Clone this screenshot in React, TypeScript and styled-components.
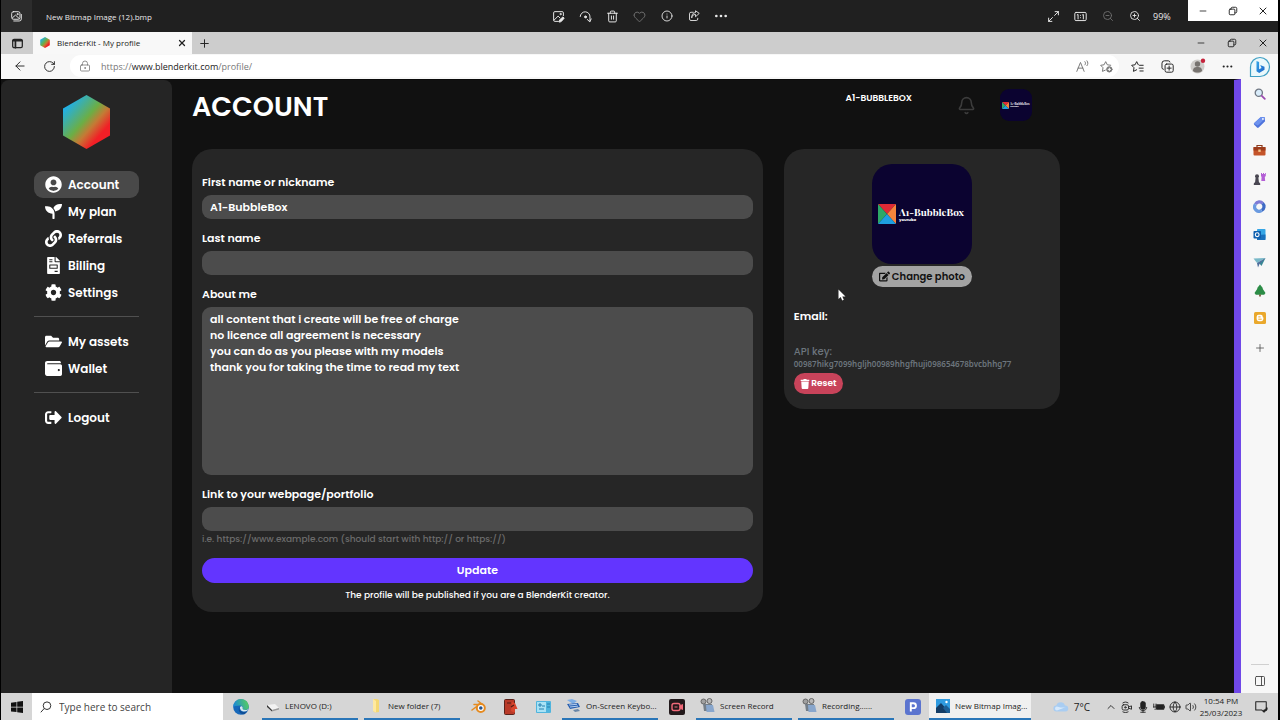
import React from "react";
import styled, { createGlobalStyle } from "styled-components";
import {
  FaUserCircle, FaSeedling, FaLink, FaFileInvoice, FaCog, FaFolderOpen, FaWallet,
  FaSignOutAlt, FaEdit, FaTrash,
} from "react-icons/fa";
import {
  Trash2, Heart, Info, Maximize2, ZoomIn, ZoomOut, Minus, X, Plus, ArrowLeft,
  RotateCw, LockKeyhole, Ellipsis, ChevronUp, Bell, PanelRight, Volume2, Globe,
} from "lucide-react";

const brandFont = `Poppins, Inter, "Open Sans", sans-serif`;
const systemFont = `"Segoe UI", "Open Sans", "Noto Sans", sans-serif`;

const GlobalStyle = createGlobalStyle`
  *, *::before, *::after { box-sizing: border-box; }
  body { margin: 0; background: #000; font-family: ${systemFont}; }
  button, input, textarea { font: inherit; color: inherit; }
  button { border: 0; padding: 0; background: none; cursor: pointer; }
  svg { display: block; flex: none; }
`;

/* ---------- window shells ---------- */

const Desktop = styled.div`
  min-height: 100vh;
  display: flex;
  flex-direction: column;
  border-left: 1px solid #000;
  border-right: 2px solid #000;
`;

const PhotoBar = styled.header`
  display: grid;
  grid-template-columns: 1fr auto 1fr;
  height: 32px;
  background: #202020;
  color: #e8e8e8;
`;

const PhotoTitle = styled.div`
  display: flex;
  align-items: center;
  gap: 14px;
  font-size: 8px;
  white-space: nowrap;
`;

const AppTile = styled.span`
  display: grid;
  place-items: center;
  width: 31px;
  height: 32px;
  background: #2c2c2c;
`;

const ToolGroup = styled.div<{ $end?: boolean }>`
  display: flex;
  align-items: center;
  justify-content: ${(p) => (p.$end ? "flex-end" : "center")};
`;

const IconButton = styled.button<{ $w?: number; $dim?: boolean }>`
  display: grid;
  place-items: center;
  width: ${(p) => p.$w ?? 27}px;
  height: 22px;
  opacity: ${(p) => (p.$dim ? 0.4 : 1)};
`;

const ZoomLevel = styled.span`
  width: 40px;
  padding-left: 5px;
  font-size: 9px;
`;

const WindowControls = styled.div<{ $light?: boolean }>`
  display: flex;
  align-self: flex-start;
  height: 21px;
  background: ${(p) => (p.$light ? "#fff" : "transparent")};
  color: #222;
`;

const Browser = styled.section`
  flex: 1;
  display: flex;
  flex-direction: column;
`;

const TabStrip = styled.div`
  display: flex;
  height: 22px;
  padding-left: 1px;
  background: #cdcdcd;
  color: #222;
`;

const Tab = styled.div`
  display: flex;
  align-items: center;
  gap: 7px;
  width: 159px;
  padding: 0 1px 1px 7px;
  background: #f8f8f8;
  font-size: 8px;
  white-space: nowrap;
`;

const Spacer = styled.span`
  flex: 1;
`;

const BrowserBody = styled.div`
  flex: 1;
  display: flex;
`;

const BrowserMain = styled.div`
  flex: 1;
  min-width: 0;
  display: flex;
  flex-direction: column;
`;

const Toolbar = styled.div`
  display: flex;
  align-items: center;
  height: 25px;
  padding: 0 0 1px 4px;
  background: #f7f7f7;
  color: #222;
`;

const AddressBar = styled.div`
  flex: 1;
  display: flex;
  align-items: center;
  height: 22px;
  margin: 0 3px 0 7px;
  padding: 0 1px 0 9px;
  border-radius: 11px;
  background: #fff;
  color: #777;
  font-size: 9px;
`;

const Url = styled.div`
  flex: 1;
  padding-left: 10px;
  white-space: nowrap;

  b { font-weight: 400; color: #222; }
`;

const TrailingTools = styled.div`
  display: flex;
  padding-right: 1px;
`;

const EdgeSidebar = styled.aside`
  width: 37px;
  display: flex;
  flex-direction: column;
  align-items: center;
  background: #f7f7f7;
  color: #444;
`;

const SideButton = styled.button<{ $h?: number }>`
  display: grid;
  place-items: center;
  width: 37px;
  height: ${(p) => p.$h ?? 28}px;
`;

const SideRule = styled.hr`
  width: 18px;
  margin: 0 0 4px;
  border: 0;
  border-top: 1px solid #d0d0d0;
`;

/* ---------- profile page ---------- */

const Page = styled.div`
  position: relative;
  flex: 1;
  display: flex;
  border-top: 1px solid #0a0a0a;
  border-right: 7px solid #7048e8;
  background: #111;
  color: #fff;
  font-family: ${brandFont};
`;

const Sidebar = styled.nav`
  width: 171px;
  padding: 15px 33px;
  border-radius: 8px 8px 0 0;
  background: #252525;
`;

const LogoLink = styled.a`
  display: flex;
  justify-content: center;
  margin-bottom: 22px;
`;

const NavList = styled.ul`
  margin: 0;
  padding: 0;
  list-style: none;

  & + & {
    margin-top: 10px;
    padding-top: 11px;
    border-top: 1px solid #505050;
  }
`;

const NavLink = styled.a<{ $active?: boolean }>`
  display: flex;
  align-items: center;
  gap: 6px;
  height: 27px;
  padding-left: 11px;
  border-radius: 9px;
  background: ${(p) => (p.$active ? "#494949" : "transparent")};
  color: #fff;
  font-size: 12px;
  font-weight: 600;
  text-decoration: none;
  white-space: nowrap;
`;

const NavIcon = styled.span`
  width: 17px;

  svg { width: auto; height: 17px; }
`;

const Content = styled.main`
  flex: 1;
  max-width: 908px;
  padding: 0 20px;
`;

const ContentHeader = styled.header`
  display: flex;
  align-items: flex-start;
  height: 69px;
  padding: 9px 28px 0 0;
`;

const Title = styled.h1`
  flex: 1;
  margin: 0;
  font-size: 27px;
  line-height: 36px;
  font-weight: 600;
`;

const UserName = styled.span`
  margin-right: 45px;
  font-size: 9px;
  line-height: 18px;
  font-weight: 600;
`;

const BellButton = styled.button`
  margin: 7px 24px 0 0;
  color: #3c3c3c;
`;

const Columns = styled.div`
  display: grid;
  grid-template-columns: 31fr 15fr;
  align-items: start;
  gap: 21px;
`;

const Card = styled.section`
  padding: 15px 10px;
  border-radius: 20px;
  background: #262626;
`;

const ProfileForm = styled.form`
  display: flex;
  flex-direction: column;
  padding: 14px 10px 8px;
  border-radius: 20px;
  background: #262626;
`;

const Label = styled.label`
  padding: 10px 0 4px;
  font-size: 11px;
  line-height: 18px;
  font-weight: 600;
`;

const TextInput = styled.input`
  width: 100%;
  height: 24px;
  padding: 0 8px;
  border: 0;
  border-radius: 9px;
  background: #4c4c4c;
  font-size: 11px;
  font-weight: 600;
`;

const TextArea = styled.textarea`
  width: 100%;
  height: 168px;
  padding: 4px 8px;
  border: 0;
  border-radius: 9px;
  background: #4c4c4c;
  font-size: 11px;
  line-height: 16px;
  font-weight: 600;
  resize: none;
`;

const Help = styled.small`
  margin-bottom: 10px;
  color: #6c6c6c;
  font-size: 9px;
  line-height: 17px;
  font-weight: 500;
`;

const SubmitButton = styled.button`
  height: 25px;
  border-radius: 13px;
  background: #6335ff;
  font-size: 11px;
  font-weight: 600;
`;

const Note = styled.p`
  margin: 3px 0 0;
  font-size: 9px;
  line-height: 18px;
  font-weight: 500;
  text-align: center;
`;

const PhotoBlock = styled.div`
  display: flex;
  flex-direction: column;
  align-items: center;
  gap: 2px;
`;

const AvatarBox = styled.span<{ $small?: boolean }>`
  display: flex;
  align-items: center;
  gap: ${(p) => (p.$small ? 1 : 3)}px;
  width: ${(p) => (p.$small ? 32 : 100)}px;
  height: ${(p) => (p.$small ? 32 : 100)}px;
  padding-left: ${(p) => (p.$small ? 2 : 6)}px;
  border-radius: ${(p) => (p.$small ? 9 : 20)}px;
  background: #0b0330;
  color: #fff;
  white-space: nowrap;
`;

const AvatarText = styled.span<{ $small?: boolean }>`
  display: flex;
  flex-direction: column;
  font-family: "Playfair Display", "Liberation Serif", serif;
  font-size: ${(p) => (p.$small ? 3 : 10)}px;
  line-height: ${(p) => (p.$small ? 4 : 10)}px;
  font-weight: 700;

  small {
    font-family: ${brandFont};
    font-size: ${(p) => (p.$small ? 2 : 4)}px;
    line-height: ${(p) => (p.$small ? 2 : 5)}px;
  }
`;

const PillButton = styled.button<{ $danger?: boolean }>`
  display: flex;
  align-items: center;
  justify-content: center;
  gap: ${(p) => (p.$danger ? 1 : 2)}px;
  min-width: ${(p) => (p.$danger ? 49 : 100)}px;
  height: 21px;
  border-radius: 11px;
  background: ${(p) => (p.$danger ? "#c8435a" : "#a3a3a3")};
  color: ${(p) => (p.$danger ? "#fff" : "#111")};
  font-size: ${(p) => (p.$danger ? 9 : 10)}px;
  font-weight: 600;
  white-space: nowrap;
`;

const Email = styled.p`
  margin: 20px 0 21px;
  font-size: 11px;
  line-height: 18px;
  font-weight: 600;
`;

const ApiKey = styled.p`
  margin: 0 0 3px;
  color: #6c757d;
  font-size: 10px;
  line-height: 12px;
  font-weight: 500;

  code {
    display: block;
    font-family: "Noto Sans", sans-serif;
    font-size: 8px;
    font-weight: 600;
  }
`;

const Cursor = styled.svg`
  position: absolute;
  left: 837px;
  top: 209px;
`;

/* ---------- taskbar ---------- */

const Taskbar = styled.footer`
  display: flex;
  align-items: center;
  height: 27px;
  background: #d6d6d6;
  color: #222;
`;

const SearchBox = styled.label`
  display: flex;
  align-items: center;
  gap: 7px;
  width: 191px;
  height: 27px;
  padding-left: 8px;
  background: #fff;

  input {
    flex: 1;
    min-width: 0;
    padding: 0;
    border: 0;
    outline: 0;
    font-size: 10px;
  }
  input::placeholder { color: #444; opacity: 1; }
`;

const TaskIcon = styled.button<{ $w?: number }>`
  display: grid;
  place-items: center;
  width: ${(p) => p.$w ?? 32}px;
  height: 27px;
`;

const TaskButton = styled.button<{ $active?: boolean }>`
  display: flex;
  align-items: center;
  gap: 5px;
  width: ${(p) => (p.$active ? 102 : 96)}px;
  height: 27px;
  margin: 0 ${(p) => (p.$active ? 0 : 3)}px;
  padding: 0 0 0 ${(p) => (p.$active ? 7 : 4)}px;
  border-bottom: 2px solid #2a76b8;
  background: ${(p) => (p.$active ? "#f0f0f0" : "transparent")};
  font-size: 8px;
  white-space: nowrap;
`;

const Weather = styled.button`
  display: flex;
  align-items: center;
  gap: 5px;
  margin-right: 13px;
  font-size: 10px;
`;

const Clock = styled.time`
  width: 44px;
  font-size: 8px;
  line-height: 12px;
  text-align: center;
  white-space: nowrap;
`;

/* ---------- drawings ---------- */

const Stroke = ({ s = 13, children, w = 1.2 }: { s?: number; w?: number; children: React.ReactNode }) => (
  <svg width={s} height={s} viewBox="0 0 16 16" fill="none" stroke="currentColor" strokeWidth={w} strokeLinecap="round" strokeLinejoin="round">
    {children}
  </svg>
);

const Hexagon = ({ w, h, id }: { w: number; h: number; id: string }) => (
  <svg width={w} height={h} viewBox="0 0 47 54">
    <defs>
      <linearGradient id={id} gradientUnits="userSpaceOnUse" x1="2" y1="9" x2="42" y2="44">
        <stop offset="0.05" stopColor="#20b0e8" />
        <stop offset="0.48" stopColor="#6cae45" />
        <stop offset="0.66" stopColor="#c47a35" />
        <stop offset="0.88" stopColor="#f21f26" />
      </linearGradient>
    </defs>
    <path d="M23.5 0 47 13.5v27L23.5 54 0 40.500v-27z" fill={`url(#${id})`} />
  </svg>
);

const Restore = () => (
  <Stroke s={10} w={1.5}>
    <rect x="2" y="5" width="9" height="9" rx="1.500" />
    <path d="M5 5V4a2 2 0 0 1 2-2h5a2 2 0 0 1 2 2v5a2 2 0 0 1-2 2h-1" />
  </Stroke>
);

const Mosaic = ({ w, h }: { w: number; h: number }) => (
  <svg width={w} height={h} viewBox="0 0 18 20" preserveAspectRatio="none">
    <path d="M0 0h18L9 10z" fill="#e02a35" />
    <path d="M0 0v20l9-10z" fill="#2da866" />
    <path d="M18 0v20L9 10z" fill="#f5863c" />
    <path d="M0 20h18L9 10z" fill="#1e9fe0" />
  </svg>
);

const Avatar = ({ small }: { small?: boolean }) => (
  <AvatarBox $small={small}>
    <Mosaic w={small ? 7 : 18} h={small ? 7 : 20} />
    <AvatarText $small={small}>
      A1-BubbleBox
      <small>youtube</small>
    </AvatarText>
  </AvatarBox>
);

const BingIcon = () => (
  <svg width="22" height="22" viewBox="0 0 22 22">
    <defs>
      <linearGradient id="bing" x1="0" y1="0" x2="1" y2="1">
        <stop offset="0" stopColor="#35a9e8" /><stop offset="1" stopColor="#1b60c8" />
      </linearGradient>
    </defs>
    <path d="M1.500 20.500V11a9.500 9.500 0 1 1 9.500 9.500z" fill="#eaf8fb" stroke="#3f9fc4" strokeWidth="1.200" />
    <path d="M7.500 5l2.600 1v7.200l2.400-1.300-1.300-2.900 4.300 1.700v3L10.200 17l-2.700-1.800z" fill="url(#bing)" />
  </svg>
);

const MagnifierIcon = () => (
  <svg width="12" height="12" viewBox="0 0 12 12" fill="none" strokeLinecap="round">
    <circle cx="4.800" cy="4.800" r="3.600" fill="#d9ecfa" stroke="#6f7783" strokeWidth="1.300" />
    <path d="M7.800 7.800l3 3" stroke="#9a4bb0" strokeWidth="1.800" />
  </svg>
);

const TagIcon = () => (
  <svg width="13" height="13" viewBox="0 0 13 13">
    <path d="M7.500 1.200 11.500 1l.6 4.300-6.400 6.200a1.200 1.200 0 0 1-1.700 0L1.200 8.800a1.200 1.200 0 0 1 0-1.700z" fill="#4f74dc" />
    <path d="M7.500 1.200 11.500 1l.3 2-7 6.500-3.900-1.900z" fill="#6d92ee" /><circle cx="9.900" cy="2.900" r=".9" fill="#fff" />
  </svg>
);

const BriefcaseIcon = () => (
  <svg width="13" height="12" viewBox="0 0 13 12">
    <path d="M4 3V1.500h5V3" fill="none" stroke="#8c3a1c" strokeWidth="1.200" />
    <rect x=".5" y="3" width="12" height="8.500" rx="1" fill="#c4542a" />
    <path d="M.5 3h12v3.500h-12z" fill="#9d3c1c" /><rect x="5.300" y="5.500" width="2.400" height="2.400" fill="#f5c98c" />
  </svg>
);

const GamesIcon = () => (
  <svg width="13" height="13" viewBox="0 0 13 13">
    <path d="M8 1h1v1h1V1h1v1h1V1h.8v3l-1 1 .4 4H8.300l.3-4L8 4z" fill="#b45fd6" />
    <circle cx="4" cy="4.300" r="2" fill="#4a4752" />
    <path d="M2.600 5.800h2.800L5.900 10l1.300 1.500V13H.8v-1.500L2.100 10z" fill="#4a4752" />
  </svg>
);

const LoopIcon = () => (
  <svg width="13" height="13" viewBox="0 0 13 13" fill="none" strokeWidth="3.200">
    <path d="M2.500 4.300a4.400 4.400 0 0 1 7.300-.8" stroke="#7e7bd6" />
    <path d="M9.700 3.400a4.400 4.400 0 0 1-1 7" stroke="#3e6ac4" />
    <path d="M8.700 10.400a4.400 4.400 0 0 1-6.200-6.100" stroke="#6a9ae0" />
  </svg>
);

const OutlookIcon = () => (
  <svg width="13" height="13" viewBox="0 0 13 13">
    <rect x="4" y="1" width="8.500" height="10" rx=".8" fill="#35a5e5" />
    <path d="M4 7l8.500-.5V12H4z" fill="#1a70bc" />
    <rect x=".5" y="3" width="7.500" height="7.500" rx=".8" fill="#0f5fae" />
    <circle cx="4.200" cy="6.700" r="1.900" fill="none" stroke="#fff" strokeWidth="1.100" />
  </svg>
);

const PlaneIcon = () => (
  <svg width="13" height="11" viewBox="0 0 13 11">
    <path d="M.5 1.500 12.500 1 4 6z" fill="#78b8c8" /><path d="M12.500 1 8.500 9 6 6z" fill="#3a8794" />
    <path d="M12.500 1 4 6l1 4.500L6.500 7z" fill="#4e6e9c" />
  </svg>
);

const TreeIcon = () => (
  <svg width="12" height="13" viewBox="0 0 12 13">
    <path d="M6 .5 9 4.200l-.5.4L11.500 9l-1.300 1.700H1.800L.5 9l3-4.400-.5-.4z" fill="#2c8c46" />
    <path d="M5.200 10.500h1.600v2H5.200z" fill="#6b4a2a" />
  </svg>
);

const BloggerIcon = () => (
  <svg width="12" height="12" viewBox="0 0 12 12">
    <rect width="12" height="12" rx="1.500" fill="#eaa82c" />
    <path d="M4.600 2.800h2.200c1.300 0 1.900.9 1.900 2 0 .5.200.7.700.7v1.600a2.100 2.100 0 0 1-2.100 2.100H4.700a2.100 2.100 0 0 1-2.100-2.100V4.900a2.100 2.100 0 0 1 2-2.100z" fill="#fff" />
    <path d="M4.700 4.900h1.500M4.700 7.200h2.600" stroke="#eaa82c" strokeLinecap="round" />
  </svg>
);

const ProfileIcon = () => (
  <svg width="16" height="16" viewBox="0 0 16 16">
    <circle cx="7.500" cy="8.500" r="7" fill="#cfcdca" /><circle cx="7.500" cy="6" r="2.700" fill="#77736f" />
    <path d="M3 13c0-3.500 2-4 4.500-4s4.500.5 4.500 4c-2.500 2-6.500 2-9 0z" fill="#77736f" />
    <circle cx="13" cy="2.800" r="2.200" fill="#c5243c" />
  </svg>
);

const WindowsIcon = () => (
  <svg width="12" height="12" viewBox="0 0 12 12" fill="#111">
    <path d="M0 1.700 5.500.9v4.800H0zM6.200.8 12 0v5.700H6.200zM0 6.400h5.500v4.700L0 10.400zM6.200 6.400H12V12l-5.800-.8z" />
  </svg>
);

const EdgeIcon = () => (
  <svg width="16" height="16" viewBox="0 0 16 16">
    <defs>
      <linearGradient id="edge" x1="0" y1="0.500" x2="1" y2="0.300">
        <stop offset="0" stopColor="#1a88d8" /><stop offset="1" stopColor="#58cf5c" />
      </linearGradient>
    </defs>
    <circle cx="8" cy="8" r="7.800" fill="#1668ba" />
    <path d="M.2 8A7.800 7.800 0 0 1 15.800 7.500c0 2.400-1.700 3.500-3.700 3.500-2 0-2.600-.8-2.400-1.400.5-.6.500-3.100-2.800-3.100C3.500 6.500.8 7.500.2 8z" fill="url(#edge)" />
    <path d="M6.800 7.200c-1.700 2.500.5 6.300 5 5.600 1.300-.2 2.300-.8 2.800-1L12 15c-5 1.500-8-4.500-5.200-7.800z" fill="#0e4f98" />
    <path d="M7 8.200c.7-1.500 2.800-1.200 2.700.8-.6 1.200.7 2 2.500 2 1.500 0 2.600-.5 3.200-1.300l-.6 1.600c-3 2.500-8.200.9-7.800-3.100z" fill="#d6e8ee" />
  </svg>
);

const DriveIcon = () => (
  <svg width="14" height="12" viewBox="0 0 14 12">
    <path d="M1 5l8-1 4 4-7 2z" fill="#f2f2f2" /><path d="M1 5l5 5v1.500L1 7z" fill="#333" /><path d="M6 10l7-2v1.500l-7 2z" fill="#9a9a9a" />
  </svg>
);

const FolderIcon = () => (
  <svg width="15" height="15" viewBox="2 0 15 15">
    <path d="M7 1h4l2 1v12l-4 .5L7 13z" fill="#f5d873" /><path d="M7 1l3 2v11.500L7 13z" fill="#ffe9a0" />
  </svg>
);

const BlenderIcon = () => (
  <svg width="16" height="14" viewBox="0 0 16 14">
    <path d="M7 1l4 3M1 10l8-6M3 4.500h8" stroke="#e58a1f" strokeWidth="1.500" strokeLinecap="round" fill="none" />
    <circle cx="9.800" cy="8" r="4" fill="#fff" stroke="#e58a1f" strokeWidth="2" /><circle cx="9.800" cy="8" r="1.800" fill="#28548c" />
  </svg>
);

const RedHeadIcon = () => (
  <svg width="14" height="16" viewBox="0 0 14 16">
    <rect x=".5" y=".5" width="10" height="15" rx="1" fill="#b93a28" stroke="#5a231b" />
    <path d="M8 3l3 1 2.500 6H11v4L7 12z" fill="#d8452d" /><path d="M3 4h4M7 8l3-2" stroke="#511d16" strokeWidth="1.200" />
  </svg>
);

const PanelIcon = () => (
  <svg width="15" height="12" viewBox="0 0 15 12">
    <rect width="15" height="12" rx="1" fill="#4fb4dd" /><rect x="1" y="1" width="9" height="10" fill="#a9e2f5" />
    <path d="M3 3h2v2H3zM6 5h3M3 8h5M11 3h3M11 6h3" stroke="#2680b0" fill="none" />
  </svg>
);

const KeyboardIcon = () => (
  <svg width="15" height="15" viewBox="0 0 15 15">
    <path d="M1 2l5-1 5 2-4 3z" fill="#7eaee5" /><path d="M1 6l11-1 2 4-10 2z" fill="#2960b0" />
    <path d="M3 7l8-.7M4 9l8-.9" stroke="#d5e8ff" strokeWidth=".8" /><path d="M7 12l5-1 2 2-5 1z" fill="#6a87a8" />
  </svg>
);

const RecorderIcon = () => (
  <svg width="16" height="16" viewBox="0 0 16 16">
    <rect width="16" height="16" rx="2" fill="#22191b" />
    <rect x="3" y="4.500" width="8" height="7" rx="2" fill="none" stroke="#f16a7a" strokeWidth="1.400" />
    <path d="M11 7l2.500-1.500v5L11 9zM5.500 8h3" fill="#f16a7a" stroke="#f16a7a" />
  </svg>
);

const CamcorderIcon = () => (
  <svg width="15" height="15" viewBox="0 0 15 15">
    <circle cx="3.500" cy="3.500" r="2.500" fill="#a0a0a0" stroke="#666" /><circle cx="9.500" cy="3" r="2.500" fill="#b8b8b8" stroke="#666" />
    <path d="M3 6h9v7H4z" fill="#747e88" /><path d="M6 7h7l1.500 7H6.500z" fill="#88a6cc" />
  </svg>
);

const PIcon = () => (
  <svg width="16" height="16" viewBox="0 0 16 16">
    <rect width="16" height="16" rx="3" fill="#5b74cf" />
    <path d="M5.800 12.500V4.200h2.700a2.400 2.400 0 0 1 0 4.900H6" fill="none" stroke="#fff" strokeWidth="1.900" />
  </svg>
);

const PictureIcon = () => (
  <svg width="14" height="14" viewBox="0 0 14 14">
    <rect width="14" height="14" fill="#2f9be0" /><path d="M0 9l5-5 9 10H0z" fill="#143d66" />
    <path d="M7 9l3-3 4 4v4h-3z" fill="#1d5f96" /><circle cx="10.500" cy="3" r="1.200" fill="#fff" />
  </svg>
);

const CloudIcon = () => (
  <svg width="16" height="11" viewBox="0 0 16 11">
    <path d="M3.500 10.500a3 3 0 0 1-.2-6A4.500 4.500 0 0 1 12 4.500a3 3 0 0 1 .5 6z" fill="#a9cdf2" />
    <path d="M4 9.500a2 2 0 0 1 0-4c1 .2 4 2 9 .5" fill="#d6e9fc" />
  </svg>
);

/* ---------- composition ---------- */

type NavEntry = { label: string; icon: React.ReactNode; active?: boolean };

const navGroups: NavEntry[][] = [
  [
    { label: "Account", icon: <FaUserCircle />, active: true },
    { label: "My plan", icon: <FaSeedling /> },
    { label: "Referrals", icon: <FaLink /> },
    { label: "Billing", icon: <FaFileInvoice /> },
    { label: "Settings", icon: <FaCog /> },
  ],
  [
    { label: "My assets", icon: <FaFolderOpen /> },
    { label: "Wallet", icon: <FaWallet /> },
  ],
  [{ label: "Logout", icon: <FaSignOutAlt /> }],
];

const sideApps: [string, React.ReactNode][] = [
  ["Search", <MagnifierIcon />],
  ["Shopping", <TagIcon />],
  ["Tools", <BriefcaseIcon />],
  ["Games", <GamesIcon />],
  ["Microsoft 365", <LoopIcon />],
  ["Outlook", <OutlookIcon />],
  ["Drop", <PlaneIcon />],
  ["E-tree", <TreeIcon />],
  ["Blogger", <BloggerIcon />],
];

const about = `all content that i create will be free of charge
no licence all agreement is necessary
you can do as you please with my models
thank you for taking the time to read my text`;

const Controls = ({ light, w }: { light?: boolean; w: number }) => (
  <WindowControls $light={light}>
    <IconButton $w={w} aria-label="Minimize"><Minus size={10} strokeWidth={2} /></IconButton>
    <IconButton $w={w} aria-label="Restore"><Restore /></IconButton>
    <IconButton $w={w} aria-label="Close"><X size={12} strokeWidth={2} /></IconButton>
  </WindowControls>
);

const PhotoViewerBar = () => (
  <PhotoBar>
    <PhotoTitle>
      <AppTile>
        <Stroke s={11} w={1.4}>
          <rect x="1" y="1" width="12" height="11" rx="2.500" />
          <path d="M4 14.500h8a3 3 0 0 0 3-3V5M2 10l4.500-4 5.500 5" /><circle cx="9.500" cy="4.500" r=".8" />
        </Stroke>
      </AppTile>
      New Bitmap Image (12).bmp
    </PhotoTitle>
    <ToolGroup>
      <IconButton aria-label="Edit image">
        <Stroke><path d="M8 14H3.500A1.500 1.500 0 0 1 2 12.500v-9A1.500 1.500 0 0 1 3.500 2h9A1.500 1.500 0 0 1 14 3.500V7M2.500 12.500l5-5 2 2" /><circle cx="10.500" cy="5" r=".8" /><path d="M9 14.500l.5-2.500 4-3.500 1.500 1.500-3.500 4z" fill="currentColor" /></Stroke>
      </IconButton>
      <IconButton aria-label="Rotate">
        <Stroke><path d="M1.500 8a6 6 0 1 1 12 .5V14M10 11.500l3.200 3 1.800-3.500" /><circle cx="8" cy="8.500" r="1.200" fill="currentColor" /></Stroke>
      </IconButton>
      <IconButton aria-label="Delete"><Trash2 size={13} strokeWidth={1.8} /></IconButton>
      <IconButton $dim aria-label="Favorite"><Heart size={13} strokeWidth={1.8} /></IconButton>
      <IconButton aria-label="Info"><Info size={12} strokeWidth={1.8} /></IconButton>
      <IconButton aria-label="Share">
        <Stroke s={12}><path d="M7 3H4a2 2 0 0 0-2 2v7a2 2 0 0 0 2 2h7a2 2 0 0 0 2-2v-1M5 10c.5-3 2-4 5-4V9l5-4.500L10 1v2.500C6 3.500 5 7 5 10z" /></Stroke>
      </IconButton>
      <IconButton aria-label="More"><Ellipsis size={16} strokeWidth={2} /></IconButton>
    </ToolGroup>
    <ToolGroup $end>
      <IconButton aria-label="Full screen"><Maximize2 size={13} strokeWidth={1.8} /></IconButton>
      <IconButton aria-label="Actual size">
        <Stroke><rect x="1" y="3" width="14" height="10" rx="1.500" /><path d="M4 6l1-.5V11M10.500 6l1-.5V11M8 6.500v.1M8 9.500v.1" /></Stroke>
      </IconButton>
      <IconButton $dim aria-label="Zoom out"><ZoomOut size={12} strokeWidth={1.8} /></IconButton>
      <IconButton aria-label="Zoom in"><ZoomIn size={12} strokeWidth={1.8} /></IconButton>
      <ZoomLevel>99%</ZoomLevel>
      <Controls light w={30} />
    </ToolGroup>
  </PhotoBar>
);

const BrowserToolbar = () => (
  <Toolbar>
    <IconButton $w={30} aria-label="Back"><ArrowLeft size={14} strokeWidth={1.6} /></IconButton>
    <IconButton $w={28} aria-label="Refresh"><RotateCw size={13} strokeWidth={1.7} /></IconButton>
    <AddressBar>
      <LockKeyhole size={12} strokeWidth={1.6} />
      <Url role="textbox" tabIndex={0} aria-label="Address">https://<b>www.blenderkit.com</b>/profile/</Url>
      <IconButton $w={24} aria-label="Read aloud">
        <Stroke><path d="M1 14L5.500 3 10 14M2.500 10h6M11 2c1 1 1 3 0 4M13.500 1c1.500 2 1.500 4 0 6" /></Stroke>
      </IconButton>
      <IconButton $w={24} aria-label="Add to favorites">
        <Stroke><path d="M6.500 12.500L3 14l.7-4.500L.8 6.500l4.200-.6L7 2l2 3.900 4.200.6" /><circle cx="11.500" cy="11.500" r="3.300" fill="#777" /><path d="M11.500 10v3M10 11.500h3" stroke="#fff" /></Stroke>
      </IconButton>
    </AddressBar>
    <TrailingTools>
      <IconButton $w={30} aria-label="Favorites">
        <Stroke><path d="M7 12L3 14l.7-4.500L.8 6.500l4.200-.6L7 2l2 3.900M10.500 6.500H15M10 10h5M11 13.500h4" /></Stroke>
      </IconButton>
      <IconButton $w={30} aria-label="Collections">
        <Stroke><rect x="5" y="5" width="10" height="10" rx="2" /><path d="M10 7.500v5M7.500 10h5M3 11.500a2 2 0 0 1-1.800-2V4a3 3 0 0 1 3-3H9a2 2 0 0 1 2 1.500" /></Stroke>
      </IconButton>
      <IconButton $w={32} aria-label="Profile"><ProfileIcon /></IconButton>
      <IconButton $w={26} aria-label="Settings and more"><Ellipsis size={13} strokeWidth={2} /></IconButton>
    </TrailingTools>
  </Toolbar>
);

const AccountPage = () => (
  <Page>
    <Sidebar>
      <LogoLink href="#home" aria-label="BlenderKit"><Hexagon w={47} h={54} id="logo" /></LogoLink>
      {navGroups.map((group, i) => (
        <NavList key={i}>
          {group.map((n) => (
            <li key={n.label}>
              <NavLink href={`#${n.label}`} $active={n.active}><NavIcon>{n.icon}</NavIcon>{n.label}</NavLink>
            </li>
          ))}
        </NavList>
      ))}
    </Sidebar>
    <Content>
      <ContentHeader>
        <Title>ACCOUNT</Title>
        <UserName>A1-BUBBLEBOX</UserName>
        <BellButton aria-label="Notifications"><Bell size={19} strokeWidth={2} /></BellButton>
        <Avatar small />
      </ContentHeader>
      <Columns>
        <ProfileForm onSubmit={(e) => e.preventDefault()}>
          <Label htmlFor="first">First name or nickname</Label>
          <TextInput id="first" defaultValue="A1-BubbleBox" />
          <Label htmlFor="last">Last name</Label>
          <TextInput id="last" />
          <Label htmlFor="about">About me</Label>
          <TextArea id="about" defaultValue={about} />
          <Label htmlFor="link">Link to your webpage/portfolio</Label>
          <TextInput id="link" />
          <Help>i.e. https://www.example.com (should start with http:// or https://)</Help>
          <SubmitButton>Update</SubmitButton>
          <Note>The profile will be published if you are a BlenderKit creator.</Note>
        </ProfileForm>
        <Card>
          <PhotoBlock>
            <Avatar />
            <PillButton><FaEdit size={11} />Change photo</PillButton>
          </PhotoBlock>
          <Email>Email:</Email>
          <ApiKey>
            API key:
            <code>00987hikg7099hgljh00989hhgfhuji098654678bvcbhhg77</code>
          </ApiKey>
          <PillButton $danger><FaTrash size={10} />Reset</PillButton>
        </Card>
      </Columns>
    </Content>
    <Cursor width="8" height="12" viewBox="0 0 8 12">
      <path d="M.5.5v9.500l2.200-2 1.500 3.500 1.600-.7L4.300 7.500h3.200z" fill="#fff" />
    </Cursor>
  </Page>
);

const SystemTaskbar = () => (
  <Taskbar>
    <TaskIcon $w={31} aria-label="Start"><WindowsIcon /></TaskIcon>
    <SearchBox>
      <svg width="12" height="12" viewBox="0 0 12 12" fill="none" stroke="#333"><circle cx="7" cy="4.700" r="3.800" /><path d="M4.200 7.500.8 11.300" /></svg>
      <input type="text" aria-label="Search" placeholder="Type here to search" />
    </SearchBox>
    <TaskIcon $w={36} aria-label="Edge"><EdgeIcon /></TaskIcon>
    <TaskButton><DriveIcon />LENOVO (D:)</TaskButton>
    <TaskButton><FolderIcon />New folder (7)</TaskButton>
    <TaskIcon aria-label="Blender"><BlenderIcon /></TaskIcon>
    <TaskIcon aria-label="Profiles"><RedHeadIcon /></TaskIcon>
    <TaskIcon aria-label="Control panel"><PanelIcon /></TaskIcon>
    <TaskButton><KeyboardIcon />On-Screen Keybo...</TaskButton>
    <TaskIcon aria-label="Recorder"><RecorderIcon /></TaskIcon>
    <TaskButton><CamcorderIcon />Screen Record</TaskButton>
    <TaskButton><CamcorderIcon />Recording......</TaskButton>
    <TaskIcon aria-label="P"><PIcon /></TaskIcon>
    <TaskButton $active><PictureIcon />New Bitmap Imag...</TaskButton>
    <Spacer />
    <Weather><CloudIcon />7°C</Weather>
    <TaskIcon $w={16} aria-label="Show hidden icons"><ChevronUp size={12} strokeWidth={1.8} /></TaskIcon>
    <TaskIcon $w={16} aria-label="Meet now">
      <Stroke s={12}><rect x="1.500" y="5" width="8.500" height="7" rx="2" /><path d="M10 8l4-1.500v4.500L10 9.500M2.500 2.500c2-1.500 5-1.500 7 0M2.500 14.500c2 1.200 5 1.200 7 0" /><circle cx="5.800" cy="8.500" r="1" /></Stroke>
    </TaskIcon>
    <TaskIcon $w={16} aria-label="Microphone">
      <Stroke s={12}><rect x="5" y="1" width="6" height="10" rx="2" fill="currentColor" /><path d="M3 8.500c0 6 10 6 10 0M8 13v2M5 15h6" /></Stroke>
    </TaskIcon>
    <TaskIcon $w={16} aria-label="Battery">
      <Stroke s={12}><path d="M1 4v4M4 4v4M0 8h5v1c0 2-2 2-2.500 2" /><rect x="5" y="5" width="9.500" height="6" fill="currentColor" /><path d="M15.500 7v2" /></Stroke>
    </TaskIcon>
    <TaskIcon $w={16} aria-label="Network"><Globe size={12} strokeWidth={1.8} /></TaskIcon>
    <TaskIcon $w={16} aria-label="Volume"><Volume2 size={12} strokeWidth={1.6} /></TaskIcon>
    <Clock>10:54 PM<br />25/03/2023</Clock>
    <TaskIcon $w={35} aria-label="Notifications">
      <Stroke s={14}><path d="M2 2h12v9.500h-2.500V14L9 11.500H2z" /><path d="M14.500 9.500a3 3 0 0 1-3 3" strokeWidth="2.200" /></Stroke>
    </TaskIcon>
  </Taskbar>
);

export default function App() {
  return (
    <Desktop>
      <GlobalStyle />
      <PhotoViewerBar />
      <Browser>
        <TabStrip>
          <IconButton $w={31} aria-label="Tab actions">
            <Stroke s={11} w={1.8}><rect x="1" y="2" width="14" height="12" rx="2" /><path d="M1.500 4h13M5 5v9" strokeWidth="2.500" /></Stroke>
          </IconButton>
          <Tab>
            <Hexagon w={10} h={11} id="favicon" />
            BlenderKit - My profile
            <Spacer />
            <IconButton $w={18} aria-label="Close tab"><X size={10} strokeWidth={3} /></IconButton>
          </Tab>
          <IconButton $w={24} aria-label="New tab"><Plus size={13} strokeWidth={1.8} /></IconButton>
          <Spacer />
          <Controls w={31} />
        </TabStrip>
        <BrowserBody>
          <BrowserMain>
            <BrowserToolbar />
            <AccountPage />
          </BrowserMain>
          <EdgeSidebar>
            <SideButton $h={26} aria-label="Discover"><BingIcon /></SideButton>
            {sideApps.map(([name, icon]) => (
              <SideButton key={name} aria-label={name}>{icon}</SideButton>
            ))}
            <SideButton $h={32} aria-label="Customize"><Plus size={12} strokeWidth={1.5} /></SideButton>
            <Spacer />
            <SideRule />
            <SideButton $h={24} aria-label="Hide sidebar"><PanelRight size={12} strokeWidth={1.8} /></SideButton>
          </EdgeSidebar>
        </BrowserBody>
      </Browser>
      <SystemTaskbar />
    </Desktop>
  );
}
